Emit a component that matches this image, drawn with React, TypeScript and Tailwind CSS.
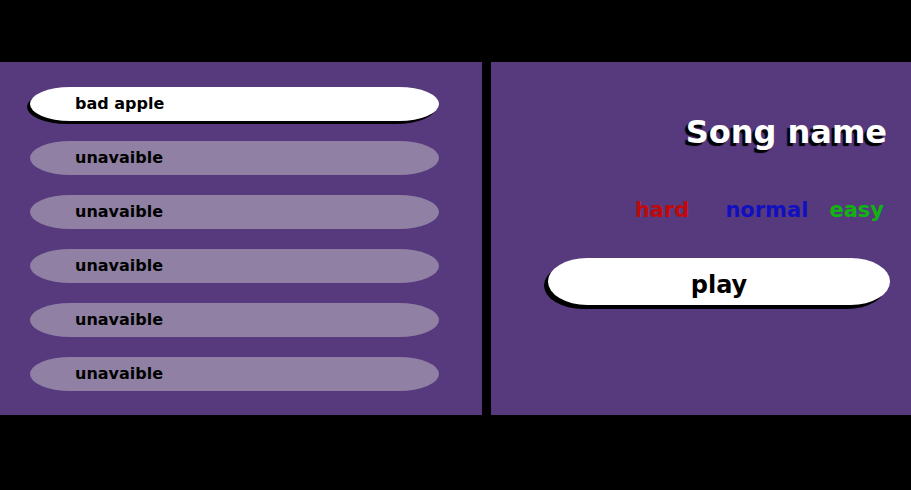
const songs = [
  { name: "bad apple", available: true },
  { name: "unavaible", available: false },
  { name: "unavaible", available: false },
  { name: "unavaible", available: false },
  { name: "unavaible", available: false },
  { name: "unavaible", available: false },
];

export default function App() {
  return (
    <div className="w-[911px] h-[490px] bg-black flex flex-col justify-center font-['DejaVu_Sans',sans-serif] select-none">
      <div className="flex h-[353px] mt-[-14px] gap-[9px]">
        {/* song list */}
        <div className="w-[482px] bg-[#573a7e] flex flex-col gap-[20px] pt-[25px] pl-[30px]">
          {songs.map((s, i) => (
            <div
              key={i}
              className={`w-[409px] h-[34px] flex items-center pl-[45px] pt-[1px] rounded-[40px/17px] text-[16px] font-bold text-black ${
                s.available ? "bg-white shadow-[-3px_3px_0_#000]" : "bg-[#8f80a4]"
              }`}
            >
              {s.name}
            </div>
          ))}
        </div>

        {/* details */}
        <div className="flex-1 bg-[#573a7e] flex flex-col">
          <div className="mt-[54px] pr-[24px] text-right text-[32px] leading-none font-bold text-white [text-shadow:-3px_3px_1px_#000]">
            Song name
          </div>
          <div className="mt-[52px] flex justify-end pr-[27px] text-[21px] leading-none font-bold">
            <span className="text-[#c00a0a]">hard</span>
            <span className="ml-[36px] text-[#1010c0]">normal</span>
            <span className="ml-[21px] text-[#10b410]">easy</span>
          </div>
          <button className="mt-[37px] ml-[57px] w-[342px] h-[47px] bg-white rounded-[40px/24px] shadow-[-4px_4px_0_#000] text-[24px] font-bold text-black flex items-center justify-center pt-[8px]">
            play
          </button>
        </div>
      </div>
    </div>
  );
}
